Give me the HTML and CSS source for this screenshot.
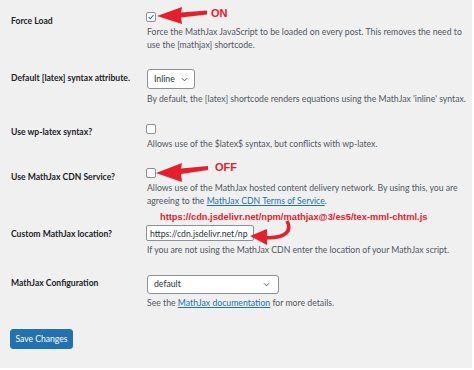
FILE: index.html
```html
<!DOCTYPE html>
<html lang="en">
<head>
<meta charset="utf-8">
<title>MathJax settings</title>
<link rel="stylesheet" href="styles.css">
</head>
<body>
<div class="panel">
  <form class="form">
    <div class="row">
      <div class="row-label">Force Load</div>
      <div class="row-field">
        <span class="check is-checked"><svg viewBox="0 0 10 10" width="8" height="8"><path d="M2 5.2 L4.1 7.2 L8 2.6" fill="none" stroke="#2271b1" stroke-width="1.4"/></svg></span>
        <p class="desc">Force the MathJax JavaScript to be loaded on every post. This removes the need to use the [mathjax] shortcode.</p>
      </div>
    </div>
    <div class="row">
      <div class="row-label">Default [latex] syntax attribute.</div>
      <div class="row-field">
        <span class="select select-small">Inline<svg class="chev" viewBox="0 0 8 5" width="7" height="5"><path d="M1 1 L4 4 L7 1" fill="none" stroke="#50575e" stroke-width="1.1"/></svg></span>
        <p class="desc">By default, the [latex] shortcode renders equations using the MathJax 'inline' syntax.</p>
      </div>
    </div>
    <div class="row">
      <div class="row-label">Use wp-latex syntax?</div>
      <div class="row-field">
        <span class="check"></span>
        <p class="desc">Allows use of the $latex$ syntax, but conflicts with wp-latex.</p>
      </div>
    </div>
    <div class="row">
      <div class="row-label">Use MathJax CDN Service?</div>
      <div class="row-field">
        <span class="check"></span>
        <p class="desc">Allows use of the MathJax hosted content delivery network. By using this, you are agreeing to the <a href="#">MathJax CDN Terms of Service</a>.</p>
      </div>
    </div>
    <div class="row">
      <div class="row-label">Custom MathJax location?</div>
      <div class="row-field">
        <span class="text-input">https://cdn.jsdelivr.net/np</span>
        <p class="desc desc-tight">If you are not using the MathJax CDN enter the location of your MathJax script.</p>
      </div>
    </div>
    <div class="row">
      <div class="row-label">MathJax Configuration</div>
      <div class="row-field">
        <span class="select select-wide">default<svg class="chev" viewBox="0 0 8 5" width="7" height="5"><path d="M1 1 L4 4 L7 1" fill="none" stroke="#50575e" stroke-width="1.1"/></svg></span>
        <p class="desc desc-tight">See the <a href="#">MathJax documentation</a> for more details.</p>
      </div>
    </div>
    <button type="button" class="save">Save Changes</button>
  </form>

  <svg class="annot" viewBox="0 0 472 368" width="472" height="368">
    <polygon fill="#e3202b" points="157,16 182,7 181,12.5 207,10.5 207,14.5 181,17.5 182,24"/>
    <polygon fill="#e3202b" points="156,173 182,163 181,168.5 208,166 208,170 181,174 182,182"/>
    <path d="M287 221 C 292 230, 287 239, 264 237.5" fill="none" stroke="#e3202b" stroke-width="3.6"/>
    <polygon fill="#e3202b" points="250,236 267,229 267,245"/>
  </svg>
  <span class="tag tag-on">ON</span>
  <span class="tag tag-off">OFF</span>
  <span class="url-note">https://cdn.jsdelivr.net/npm/mathjax@3/es5/tex-mml-chtml.js</span>
</div>
</body>
</html>
```
FILE: styles.css
```css
html, body {
  margin: 0;
  padding: 0;
  background: #ffffff;
}

.panel {
  position: relative;
  width: 472px;
  height: 368px;
  background: #f0f0f1;
  font-family: Lato, "Open Sans", sans-serif;
  font-size: 8.7px;
  color: #1d2327;
  overflow: hidden;
}

.form {
  padding: 3px 0 0 11px;
  margin: 0;
}

.row {
  display: grid;
  grid-template-columns: 136px 1fr;
  padding: 9px 0;
  align-items: start;
}

.row-label {
  font-weight: 700;
  font-size: 8.6px;
  line-height: 12px;
  padding-top: 2.5px;
  color: #1d2327;
}

.row-field {
  display: flex;
  flex-direction: column;
  align-items: flex-start;
}

.desc {
  margin: 4px 0 0;
  line-height: 12.5px;
  color: #50575e;
  max-width: 325px;
}

.desc-tight {
  margin-top: 3px;
}

.desc a {
  color: #2271b1;
  text-decoration: underline;
}

.check {
  box-sizing: border-box;
  width: 10px;
  height: 10px;
  border: 1px solid #8c8f94;
  border-radius: 2px;
  background: #ffffff;
  display: flex;
  align-items: center;
  justify-content: center;
  margin-left: -1px;
}

.select {
  box-sizing: border-box;
  display: flex;
  align-items: center;
  justify-content: space-between;
  background: #ffffff;
  border: 1px solid #8c8f94;
  border-radius: 3px;
  color: #2c3338;
  padding: 0 6px 0 6px;
  line-height: 1;
}

.select-small {
  width: 48px;
  height: 20px;
}

.select-wide {
  width: 132px;
  height: 19px;
  padding-right: 8px;
}

.chev {
  display: block;
}

.text-input {
  box-sizing: border-box;
  display: flex;
  align-items: center;
  width: 108px;
  height: 16px;
  background: #ffffff;
  border: 1px solid #8c8f94;
  border-radius: 2px;
  padding: 0 3px;
  color: #2c3338;
  margin-left: -1px;
  white-space: nowrap;
  overflow: hidden;
}

.save {
  margin-top: 11px;
  margin-left: -1px;
  width: 63px;
  height: 20px;
  background: #2271b1;
  border: 1px solid #2271b1;
  border-radius: 3px;
  color: #ffffff;
  font-family: inherit;
  font-size: 8.6px;
  padding: 0;
}

.annot {
  position: absolute;
  left: 0;
  top: 0;
  pointer-events: none;
}

.tag {
  position: absolute;
  font-family: "Liberation Sans", Arial, sans-serif;
  font-weight: bold;
  font-size: 11px;
  line-height: 11px;
  color: #e3202b;
}

.tag-on {
  left: 211px;
  top: 8px;
}

.tag-off {
  left: 215px;
  top: 162px;
}

.url-note {
  position: absolute;
  left: 160px;
  top: 213px;
  font-family: "Liberation Sans", Arial, sans-serif;
  font-weight: bold;
  font-size: 9.3px;
  line-height: 9px;
  color: #e3202b;
  white-space: nowrap;
}
```
